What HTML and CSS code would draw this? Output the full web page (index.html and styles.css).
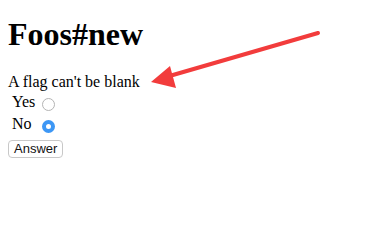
FILE: index.html
```html
<!DOCTYPE html>
<html>
<head>
<meta charset="utf-8">
<link rel="stylesheet" href="styles.css">
</head>
<body>
<h1 class="title">Foos#new</h1>
<p class="error">A flag can't be blank</p>
<form class="form">
  <div class="choices">
    <label class="choice-label" for="yes">Yes</label>
    <input class="radio" type="radio" id="yes" name="flag">
    <label class="choice-label" for="no">No</label>
    <input class="radio" type="radio" id="no" name="flag" checked>
  </div>
  <button class="answer" type="button">Answer</button>
</form>
<svg class="arrow" width="389" height="205" viewBox="0 0 389 205">
  <line x1="318" y1="33" x2="166" y2="77" stroke="#f23c3c" stroke-width="4" stroke-linecap="round"/>
  <polygon points="151,82 170,66 176,88" fill="#f23c3c"/>
</svg>
</body>
</html>
```
FILE: styles.css
```css
html, body {
  margin: 0;
  padding: 0;
  background: #fff;
}
body {
  padding: 0 8px;
  font-family: "Liberation Serif", "Times New Roman", serif;
  color: #000;
  position: relative;
  height: 205px;
  overflow: hidden;
}
.title {
  margin: 16px 0 0;
  font-size: 32px;
  line-height: 36px;
  font-weight: bold;
}
.error {
  margin: 21px 0 0;
  font-size: 16px;
  line-height: 18px;
}
.form {
  margin: 2px 0 0;
}
.choices {
  display: grid;
  grid-template-columns: 30px 14px;
  grid-auto-rows: 22px;
  align-items: start;
  padding-left: 4px;
  font-size: 16px;
  line-height: 18px;
}
.choice-label {
  display: block;
}
.radio {
  appearance: none;
  -webkit-appearance: none;
  margin: 5px 0 0;
  width: 13px;
  height: 13px;
  border-radius: 50%;
  border: 1px solid #b4b4b4;
  background: #fff;
  box-sizing: border-box;
}
.radio:checked {
  border: 4px solid #3d97f5;
  background: #fff;
}
.answer {
  display: block;
  margin-top: 3px;
  height: 18px;
  padding: 0 5px;
  font-family: "Liberation Sans", Arial, sans-serif;
  font-size: 13px;
  line-height: 16px;
  background: #fff;
  border: 1px solid #c8c8c8;
  border-radius: 4px;
  color: #111;
}
.arrow {
  position: absolute;
  left: 0;
  top: 0;
  pointer-events: none;
}
```
